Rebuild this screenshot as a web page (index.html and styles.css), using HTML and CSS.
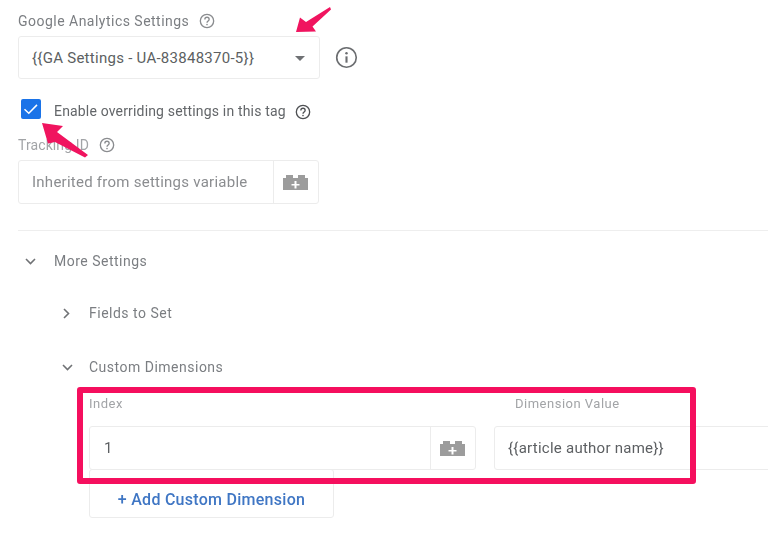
FILE: index.html
```html
<!DOCTYPE html>
<html lang="en">
<head>
<meta charset="utf-8">
<title>Google Analytics Settings</title>
<link rel="stylesheet" href="styles.css">
</head>
<body>
<svg class="defs" width="0" height="0" aria-hidden="true">
  <symbol id="help" viewBox="0 0 24 24"><circle cx="12" cy="12" r="10" fill="none" stroke="currentColor" stroke-width="2"/><path d="M8.8 9.6a3.2 3.2 0 0 1 6.4 0c0 2.4-3.2 2.4-3.2 5" fill="none" stroke="currentColor" stroke-width="2"/><circle cx="12" cy="17.4" r="1.2" fill="currentColor"/></symbol>
  <symbol id="brick" viewBox="0 0 25 15"><path fill-rule="evenodd" d="M0 15V3h3V0h7v3h5V0h7v3h3v12zM11.5 6v3h-3v1.6h3v3h2v-3h3V9h-3V6z" fill="currentColor"/></symbol>
  <symbol id="down" viewBox="0 0 11 7"><path d="M1 1l4.500 4.500L10 1" fill="none" stroke="currentColor" stroke-width="1.6"/></symbol>
  <symbol id="right" viewBox="0 0 7 11"><path d="M1 1l4.500 4.500L1 10" fill="none" stroke="currentColor" stroke-width="1.6"/></symbol>
</svg>
<main class="page">
  <div class="label-row label-row-ga">
    <span class="label">Google Analytics Settings</span>
    <svg class="help"><use href="#help"/></svg>
  </div>
  <div class="select-row">
    <div class="box select">
      <span class="value">{{GA Settings - UA-83848370-5}}</span>
      <span class="caret"></span>
    </div>
    <svg class="info" viewBox="0 0 24 24"><circle cx="12" cy="12" r="10.2" fill="none" stroke="currentColor" stroke-width="1.7"/><circle cx="12" cy="7.6" r="1.3" fill="currentColor"/><path d="M12 10.8v6.6" stroke="currentColor" stroke-width="2.2"/></svg>
  </div>
  <div class="check-row">
    <span class="checkbox"><svg viewBox="0 0 20 20"><path d="M3.500 10.200l4.300 4 8.200-8.300" fill="none" stroke="#fff" stroke-width="1.500"/></svg></span>
    <span class="check-text">Enable overriding settings in this tag</span>
    <svg class="help help-dark"><use href="#help"/></svg>
  </div>
  <div class="label-row label-row-tracking">
    <span class="label label-faint">Tracking ID</span>
    <svg class="help"><use href="#help"/></svg>
  </div>
  <div class="box input input-tracking">
    <span class="input-text placeholder">Inherited from settings variable</span>
    <span class="var-btn"><svg class="brick"><use href="#brick"/></svg></span>
  </div>
  <hr class="rule">
  <div class="section section-more">
    <svg class="chev-down"><use href="#down"/></svg>
    <span class="section-title">More Settings</span>
  </div>
  <div class="nested">
    <div class="section section-fields">
      <svg class="chev-right"><use href="#right"/></svg>
      <span class="section-title">Fields to Set</span>
    </div>
    <div class="section section-custom">
      <svg class="chev-down"><use href="#down"/></svg>
      <span class="section-title">Custom Dimensions</span>
    </div>
  </div>
  <div class="dimensions">
    <div class="dim-col dim-index">
      <span class="small-label">Index</span>
      <div class="box input input-index">
        <span class="input-text">1</span>
        <span class="var-btn var-btn-index"><svg class="brick"><use href="#brick"/></svg></span>
      </div>
    </div>
    <div class="dim-col dim-value">
      <span class="small-label small-label-value">Dimension Value</span>
      <div class="box input input-value">
        <span class="input-text">{{article author name}}</span>
      </div>
    </div>
  </div>
  <button class="add-btn" type="button">+ Add Custom Dimension</button>
</main>

<div class="highlight"></div>
<svg class="arrow arrow-top" viewBox="290 0 45 40"><path d="M296 32L300 17.500 306 22 330 7 331 9.500 312.500 26.500 316 31.500z" fill="#f0145f"/></svg>
<svg class="arrow arrow-check" viewBox="40 120 50 40"><path d="M42 123L63 126 57 132 88 155 85 157.500 55 142 48 143.500z" fill="#f0145f"/></svg>
</body>
</html>
```
FILE: styles.css
```css
html, body {
  margin: 0;
  padding: 0;
  width: 768px;
  height: 546px;
  overflow: hidden;
  background: #fff;
}
body {
  position: relative;
  font-family: Roboto, "Liberation Sans", sans-serif;
  color: #5f6368;
}
.defs { position: absolute; }
.page {
  padding: 12px 0 0 18px;
  filter: blur(0.5px);
}
.label-row {
  display: flex;
  align-items: center;
  gap: 10px;
  height: 18px;
}
.label {
  font-size: 14px;
  letter-spacing: 0.48px;
  color: #7b7e82;
}
.label-faint {
  color: #a2a4a7;
  letter-spacing: 0.1px;
}
.help {
  width: 16px;
  height: 16px;
  color: #8a8c8f;
}
.help-dark { color: #4e5053; }
.box {
  box-sizing: border-box;
  border: 1px solid #ececec;
  border-radius: 3px;
  background: #fff;
  display: flex;
  align-items: center;
}
.select-row {
  display: flex;
  align-items: center;
  margin-top: 6px;
}
.select {
  width: 302px;
  height: 43px;
  padding: 0 14px 0 13px;
  justify-content: space-between;
}
.value {
  font-size: 15px;
  letter-spacing: 0.27px;
  color: #5c5f62;
}
.caret {
  width: 0;
  height: 0;
  border-left: 5.5px solid transparent;
  border-right: 5.5px solid transparent;
  border-top: 5.5px solid #6f7174;
  margin-top: 2px;
}
.info {
  width: 23px;
  height: 23px;
  margin-left: 15px;
  color: #6b6d70;
}
.check-row {
  display: flex;
  align-items: center;
  margin: 19px 0 0 3px;
  height: 22px;
}
.checkbox {
  width: 20px;
  height: 20px;
  border-radius: 2px;
  background: #1a73e8;
  display: flex;
}
.check-text {
  font-size: 14px;
  letter-spacing: 0.17px;
  margin: 4px 0 0 13px;
  color: #636669;
}
.check-row .help { margin: 6px 0 0 9px; }
.label-row-tracking { margin-top: 16px; }
.input {
  height: 44px;
}
.input-tracking {
  width: 301px;
  margin-top: 6px;
}
.input-text {
  flex: 1;
  padding-left: 13px;
  font-size: 15px;
  letter-spacing: 0.25px;
  white-space: nowrap;
  color: #5c5f62;
}
.placeholder { color: #8b8d90; }
.input-index .input-text { padding-left: 14px; }
.var-btn {
  width: 45px;
  height: 100%;
  box-sizing: border-box;
  border-left: 1px solid #ececec;
  padding-right: 2px;
  display: flex;
  align-items: center;
  justify-content: center;
}
.brick {
  width: 25px;
  height: 15px;
  color: #9c9c9c;
}
.rule {
  border: 0;
  border-top: 1px solid #eeeeee;
  margin: 26px 0 0;
}
.section {
  display: flex;
  align-items: center;
  height: 20px;
}
.section-title {
  font-size: 14px;
  letter-spacing: 0.5px;
  color: #7b7e82;
}
.chev-down {
  width: 11px;
  height: 7px;
  color: #707275;
  margin: 0 18px 0 7px;
}
.chev-right {
  width: 7px;
  height: 11px;
  color: #707275;
  margin: 0 19px 0 0;
}
.section-more { margin-top: 20px; }
.nested { padding-left: 45px; }
.section-fields { margin-top: 32px; }
.section-custom { margin-top: 34px; }
.section-custom .chev-down { margin: 0 16px 0 -1px; }
.dimensions {
  display: flex;
  margin: 19px 0 0 71px;
  gap: 18px;
}
.dim-col {
  display: flex;
  flex-direction: column;
  flex: none;
}
.dim-index { width: 387px; }
.dim-value { width: 300px; }
.small-label {
  height: 30px;
  font-size: 13px;
  letter-spacing: 0.5px;
  line-height: 16px;
  color: #a2a4a7;
}
.small-label-value { padding-left: 21px; }
.input-index { width: 387px; }
.input-value { width: 300px; }
.add-btn {
  display: block;
  box-sizing: border-box;
  width: 245px;
  height: 49px;
  margin: -1px 0 0 71px;
  padding: 11px 0 0;
  border: 1px solid #ececec;
  border-radius: 3px;
  background: #fff;
  font-family: Roboto, "Liberation Sans", sans-serif;
  font-size: 16px;
  font-weight: 500;
  letter-spacing: 0.27px;
  color: #3f76c4;
}
.highlight {
  position: absolute;
  left: 77px;
  top: 387px;
  width: 619px;
  height: 97px;
  box-sizing: border-box;
  border: 6px solid #f50f5e;
  border-radius: 3px;
}
.arrow {
  position: absolute;
  filter: blur(0.4px);
}
.arrow-top {
  left: 290px;
  top: 0;
  width: 45px;
  height: 40px;
}
.arrow-check {
  left: 40px;
  top: 120px;
  width: 50px;
  height: 40px;
}
```
